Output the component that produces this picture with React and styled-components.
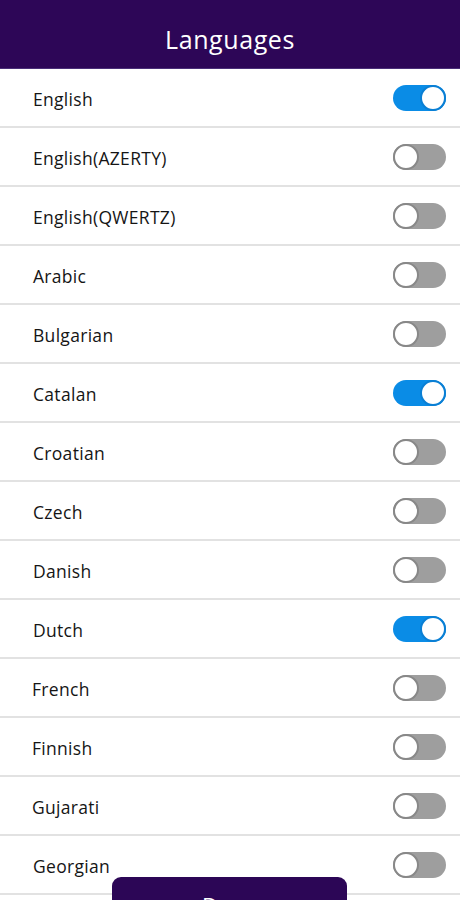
import React, { useState } from "react";
import styled, { createGlobalStyle } from "styled-components";

const Global = createGlobalStyle`
  html, body { margin: 0; padding: 0; background: #ffffff; }
  body { font-family: "Open Sans", "Noto Sans", sans-serif; overflow: hidden; }
  * { box-sizing: border-box; }
`;

const Page = styled.div`
  width: 460px;
  height: 900px;
  position: relative;
  overflow: hidden;
  background: #fff;
`;

const Header = styled.header`
  height: 69px;
  background: #2d0657;
  border-bottom: 1px solid #4a2f78;
  display: flex;
  align-items: center;
  justify-content: center;
`;

const Title = styled.h1`
  margin: 0;
  padding-top: 10px;
  color: #ffffff;
  font-weight: 400;
  font-size: 25px;
  letter-spacing: 0.6px;
`;

const List = styled.ul`
  list-style: none;
  margin: 0;
  padding: 0;
`;

const Row = styled.li`
  height: 59px;
  display: flex;
  align-items: center;
  justify-content: space-between;
  padding: 0 14px 0 ${(p) => p.$indent}px;
  border-bottom: 2px solid #e2e2e2;
`;

const Label = styled.span`
  color: #151515;
  font-size: 17.5px;
  letter-spacing: 0.3px;
  padding-top: 3px;
`;

const Track = styled.button`
  width: 53px;
  height: 26px;
  border-radius: 13px;
  border: none;
  padding: 0;
  cursor: pointer;
  display: flex;
  align-items: center;
  justify-content: ${(p) => (p.$on ? "flex-end" : "flex-start")};
  background: ${(p) => (p.$on ? "#0a8ce6" : "#9e9e9e")};
`;

const Knob = styled.span`
  width: 26px;
  height: 26px;
  border-radius: 50%;
  background: #ffffff;
  border: 2px solid ${(p) => (p.$on ? "#0a7fd4" : "#888888")};
`;

const Action = styled.button`
  position: absolute;
  left: 112px;
  top: 877px;
  width: 235px;
  height: 52px;
  border: none;
  border-radius: 9px;
  background: #2c0656;
  color: #ffffff;
  font-family: "Open Sans", sans-serif;
  font-size: 22px;
  line-height: 30px;
  padding: 13px 0 0;
  display: flex;
  justify-content: center;
  align-items: flex-start;
`;

const initial = [
  ["English", true, 33],
  ["English(AZERTY)", false, 33],
  ["English(QWERTZ)", false, 33],
  ["Arabic", false, 33],
  ["Bulgarian", false, 33],
  ["Catalan", true, 33],
  ["Croatian", false, 33],
  ["Czech", false, 33],
  ["Danish", false, 33],
  ["Dutch", true, 33],
  ["French", false, 32],
  ["Finnish", false, 32],
  ["Gujarati", false, 32],
  ["Georgian", false, 33],
];

export default function App() {
  const [items, setItems] = useState(initial);
  const toggle = (i) =>
    setItems((prev) => prev.map((it, j) => (j === i ? [it[0], !it[1], it[2]] : it)));
  return (
    <Page>
      <Global />
      <Header>
        <Title>Languages</Title>
      </Header>
      <List>
        {items.map(([name, on, indent], i) => (
          <Row key={name} $indent={indent}>
            <Label>{name}</Label>
            <Track $on={on} onClick={() => toggle(i)} aria-label={name}>
              <Knob $on={on} />
            </Track>
          </Row>
        ))}
      </List>
      <Action>Done</Action>
    </Page>
  );
}
